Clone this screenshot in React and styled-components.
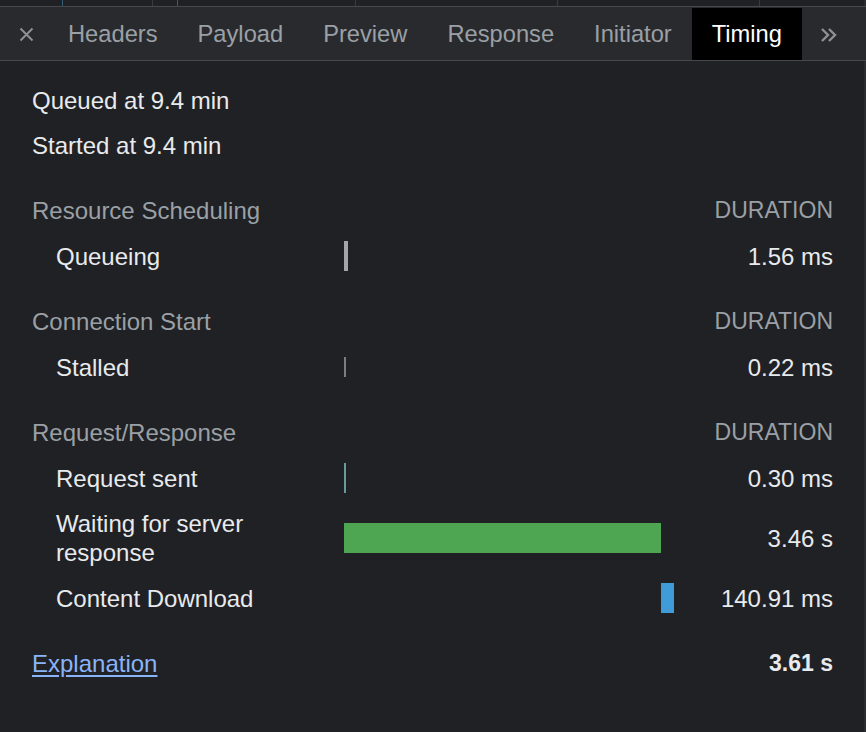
import styled, { createGlobalStyle } from 'styled-components';

const GlobalStyle = createGlobalStyle`
  html, body {
    margin: 0;
    padding: 0;
    background: #202124;
  }
  body {
    font-family: "Liberation Sans", Arial, Helvetica, sans-serif;
    -webkit-font-smoothing: antialiased;
  }
`;

// Styled Components
const Panel = styled.div`
  width: 866px;
  height: 732px;
  background: #202124;
  color: #e8eaed;
  font-size: 24px;
  overflow: hidden;
  box-sizing: border-box;
  box-shadow: inset -2px 0 0 #2b2c2f;
`;

const Strip = styled.div`
  height: 6px;
  display: grid;
  grid-template-columns: 153px 203px 202px 202px 1fr;
  border-bottom: 1px solid #46484c;
`;

const StripCell = styled.div`
  border-right: 1px solid #3a3b3e;
  position: relative;
  &:last-child {
    border-right: none;
  }
`;

const Tick = styled.span`
  position: absolute;
  top: 0;
  width: 1px;
  height: 6px;
  background: #2f5b73;
`;

const TabBar = styled.div`
  height: 54px;
  display: flex;
  align-items: stretch;
  background: #292a2d;
  border-bottom: 1px solid #46484c;
  box-sizing: border-box;
  padding-top: 1px;
`;

const CloseButton = styled.div`
  width: 48px;
  display: flex;
  align-items: center;
  padding: 1px 0 0 19px;
  box-sizing: border-box;
  color: #8e9094;
`;

const Tab = styled.div`
  display: flex;
  align-items: center;
  padding: 1px 20px 0;
  font-size: 23.7px;
  color: ${(p) => (p.$active ? '#ffffff' : '#9aa0a6')};
  background: ${(p) => (p.$active ? '#000000' : 'transparent')};
`;

const MoreButton = styled.div`
  display: flex;
  align-items: center;
  padding: 1px 0 0 18px;
  color: #8e9094;
`;

const Content = styled.div`
  padding: 17px 33px 0 32px;
`;

const Summary = styled.div`
  line-height: 45px;
`;

const Section = styled.div`
  margin-top: 19px;
`;

const Row = styled.div`
  display: grid;
  grid-template-columns: 312px 331px 1fr;
  align-items: center;
  min-height: 46px;
  padding: 8px 0;
  box-sizing: border-box;
  line-height: 29px;
`;

const SectionTitle = styled.div`
  color: #9aa0a6;
`;

const DurationHead = styled.div`
  grid-column: 2 / 4;
  text-align: right;
  color: #9aa0a6;
  font-size: 23px;
`;

const Label = styled.div`
  padding-left: 24px;
  max-width: 270px;
`;

const BarTrack = styled.div`
  display: flex;
  align-items: center;
  height: 30px;
`;

const Bar = styled.div`
  height: ${(p) => p.$h}px;
  background: ${(p) => p.$color};
  flex: none;
`;

const Value = styled.div`
  text-align: right;
  font-weight: ${(p) => (p.$bold ? 700 : 400)};
  font-size: ${(p) => (p.$bold ? '23px' : '24px')};
`;

const Footer = styled(Row)`
  margin-top: 19px;
`;

const Link = styled.a`
  color: #8ab4f8;
  text-decoration: underline;
  text-underline-offset: 3px;
  cursor: pointer;
`;

const FooterTotal = styled(Value)`
  grid-column: 2 / 4;
`;

const CloseIcon = () => (
  <svg width="15" height="15" viewBox="0 0 15 15">
    <path d="M1.5 1.5 L13.5 13.5 M13.5 1.5 L1.5 13.5" stroke="currentColor" strokeWidth="2" />
  </svg>
);

const ChevronsIcon = () => (
  <svg width="18" height="16" viewBox="0 0 18 16">
    <path
      d="M2 2 L8 8 L2 14 M9 2 L15 8 L9 14"
      stroke="currentColor"
      strokeWidth="2.4"
      fill="none"
    />
  </svg>
);

const TOTAL_MS = 3610;
const TRACK = 331;

const sections = [
  {
    title: 'Resource Scheduling',
    rows: [{ label: 'Queueing', start: 0, w: 4, h: 30, color: '#a2a5a9', value: '1.56 ms' }],
  },
  {
    title: 'Connection Start',
    rows: [{ label: 'Stalled', start: 0, w: 2, h: 20, color: '#7c7d80', value: '0.22 ms' }],
  },
  {
    title: 'Request/Response',
    rows: [
      { label: 'Request sent', start: 0, w: 2, h: 30, color: '#679a9c', value: '0.30 ms' },
      { label: 'Waiting for server response', start: 0, ms: 3460, h: 30, color: '#4ea653', value: '3.46 s' },
      { label: 'Content Download', start: 3460, ms: 140.91, h: 30, color: '#409bd9', value: '140.91 ms' },
    ],
  },
];

const tabs = ['Headers', 'Payload', 'Preview', 'Response', 'Initiator', 'Timing'];

// Component
export default function App() {
  return (
    <>
      <GlobalStyle />
      <Panel>
        <Strip>
          <StripCell>
            <Tick style={{ left: 62 }} />
          </StripCell>
          <StripCell>
            <Tick style={{ left: 24 }} />
          </StripCell>
          <StripCell />
          <StripCell />
          <StripCell />
        </Strip>
        <TabBar>
          <CloseButton>
            <CloseIcon />
          </CloseButton>
          {tabs.map((t) => (
            <Tab key={t} $active={t === 'Timing'}>
              {t}
            </Tab>
          ))}
          <MoreButton>
            <ChevronsIcon />
          </MoreButton>
        </TabBar>
        <Content>
          <Summary>Queued at 9.4 min</Summary>
          <Summary>Started at 9.4 min</Summary>
          {sections.map((s) => (
            <Section key={s.title}>
              <Row>
                <SectionTitle>{s.title}</SectionTitle>
                <DurationHead>DURATION</DurationHead>
              </Row>
              {s.rows.map((r) => {
                const left = Math.round((r.start / TOTAL_MS) * TRACK);
                const width = r.ms ? Math.round((r.ms / TOTAL_MS) * TRACK) : r.w;
                return (
                  <Row key={r.label}>
                    <Label>{r.label}</Label>
                    <BarTrack>
                      <Bar $h={r.h} $color={r.color} style={{ marginLeft: left, width }} />
                    </BarTrack>
                    <Value>{r.value}</Value>
                  </Row>
                );
              })}
            </Section>
          ))}
          <Footer>
            <Link>Explanation</Link>
            <FooterTotal $bold>3.61 s</FooterTotal>
          </Footer>
        </Content>
      </Panel>
    </>
  );
}
